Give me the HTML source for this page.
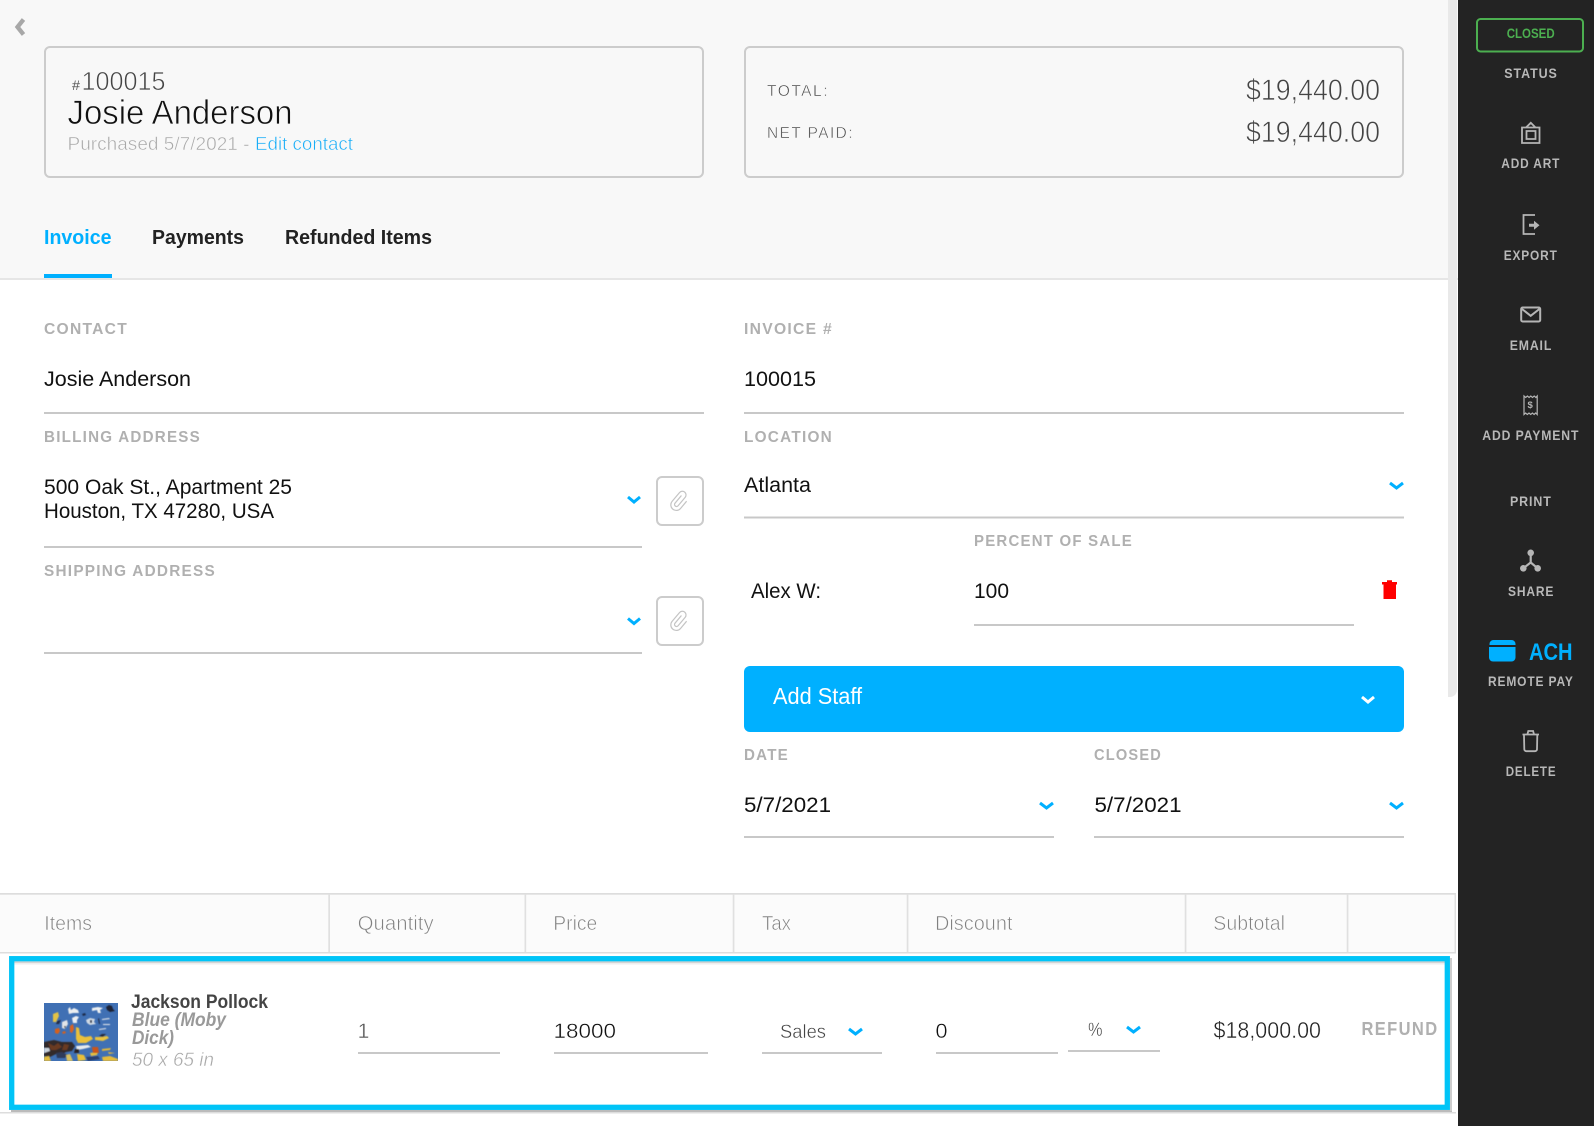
<!DOCTYPE html>
<html lang="en"><head><meta charset="utf-8"><title>Invoice 100015</title>
<style>
html,body{margin:0;padding:0;background:#fff;width:1594px;height:1126px;overflow:hidden}
svg{display:block;font-family:"Liberation Sans",sans-serif}
.l{font-size:16px;font-weight:700;fill:#b0b0b0;letter-spacing:1.3px}
.v{font-size:21px;fill:#111}
.s{font-size:14px;font-weight:700;fill:#b8b8b8;letter-spacing:1px}
.h{font-size:20px;fill:#808080;stroke:#fbfbfb;stroke-width:.6}
.tg{stroke:#f8f8f8;stroke-width:.5}
.tw{stroke:#fff;stroke-width:.4}
.ch{fill:none;stroke:#00b0ff;stroke-width:3}
.ln{fill:#c8c8c8}
.ic{fill:none;stroke:#b5b5b5;stroke-width:1.8}
.sep{fill:#e0e0e0}
.clip{fill:none;stroke:#c4c4c4;stroke-width:1.2}
</style></head><body>
<svg width="1594" height="1126" viewBox="0 0 1594 1126" xmlns="http://www.w3.org/2000/svg">
<defs><filter id="b" x="-5%" y="-5%" width="110%" height="110%"><feGaussianBlur stdDeviation=".45"/></filter><clipPath id="pc"><rect x="44" y="1003" width="74" height="58"/></clipPath></defs>
<!-- header -->
<rect x="0" y="0" width="1458" height="278" fill="#f8f8f8"/>
<rect x="0" y="278" width="1458" height="2" fill="#e6e6e6"/>
<path d="M1448 0H1457V690a7 7 0 0 1-7 7h-2z" fill="#e9e9e9"/>
<polyline points="23.5,19.5 17.5,27 23.5,34.5" fill="none" stroke="#a8a8a8" stroke-width="4.300"/>

<rect x="45" y="47" width="658" height="130" rx="5" fill="none" stroke="#ccc" stroke-width="2"/>
<text x="72" y="90" font-size="14" fill="#555" textLength="8" lengthAdjust="spacingAndGlyphs">#</text>
<text x="81.5" y="90" font-size="26" fill="#444" class="tg" style="stroke-width:.65" textLength="84" lengthAdjust="spacingAndGlyphs">100015</text>
<text x="67.5" y="124" font-size="34" fill="#111" class="tg" style="stroke-width:.7" textLength="225" lengthAdjust="spacingAndGlyphs">Josie Anderson</text>
<text x="67.5" y="150" font-size="18.500" fill="#a8a8a8" class="tg" textLength="182" lengthAdjust="spacingAndGlyphs">Purchased 5/7/2021 -</text>
<text x="255" y="150" font-size="18.500" fill="#18aef8" class="tg" textLength="98" lengthAdjust="spacingAndGlyphs">Edit contact</text>

<rect x="745" y="47" width="658" height="130" rx="5" fill="none" stroke="#ccc" stroke-width="2"/>
<text x="767" y="96" font-size="16" fill="#444" class="tg" letter-spacing="1.500" textLength="62" lengthAdjust="spacingAndGlyphs">TOTAL:</text>
<text x="767" y="138" font-size="16" fill="#444" class="tg" letter-spacing="1.500" textLength="87" lengthAdjust="spacingAndGlyphs">NET PAID:</text>
<text x="1246" y="100" font-size="29.500" fill="#444" class="tg" style="stroke-width:.7" textLength="134" lengthAdjust="spacingAndGlyphs">$19,440.00</text>
<text x="1246" y="142" font-size="29.500" fill="#444" class="tg" style="stroke-width:.7" textLength="134" lengthAdjust="spacingAndGlyphs">$19,440.00</text>

<text x="44" y="244" font-size="20.500" font-weight="700" fill="#00b0ff" textLength="67.500" lengthAdjust="spacingAndGlyphs">Invoice</text>
<text x="152" y="244" font-size="20.500" font-weight="700" fill="#222" textLength="92" lengthAdjust="spacingAndGlyphs">Payments</text>
<text x="285" y="244" font-size="20.500" font-weight="700" fill="#222" textLength="147" lengthAdjust="spacingAndGlyphs">Refunded Items</text>
<rect x="44" y="274" width="68" height="4" fill="#00b0ff"/>

<!-- left form -->
<text class="l" x="44" y="334" textLength="84" lengthAdjust="spacingAndGlyphs">CONTACT</text>
<text class="v" x="44" y="386" textLength="147" lengthAdjust="spacingAndGlyphs">Josie Anderson</text>
<rect class="ln" x="44" y="412" width="660" height="2"/>
<text class="l" x="44" y="442" textLength="157" lengthAdjust="spacingAndGlyphs">BILLING ADDRESS</text>
<text class="v" x="44" y="494" textLength="248" lengthAdjust="spacingAndGlyphs">500 Oak St., Apartment 25</text>
<text class="v" x="44" y="518" textLength="230" lengthAdjust="spacingAndGlyphs">Houston, TX 47280, USA</text>
<polyline class="ch" points="628,497 634,502 640,497"/>
<rect class="ln" x="44" y="546" width="598" height="2"/>
<rect x="657" y="477" width="46" height="48" rx="5" fill="none" stroke="#ccc" stroke-width="2"/>
<g transform="translate(679 500) rotate(40)"><path class="clip" d="M-1-5V5a2 2 0 0 0 4 0V-6a3.700 3.700 0 0 0-7.400 0V5.500a5.500 5.500 0 0 0 11 0V-4"/></g>
<text class="l" x="44" y="576" textLength="172" lengthAdjust="spacingAndGlyphs">SHIPPING ADDRESS</text>
<polyline class="ch" points="628,618.500 634,623.500 640,618.500"/>
<rect class="ln" x="44" y="652" width="598" height="2"/>
<rect x="657" y="597" width="46" height="48" rx="5" fill="none" stroke="#ccc" stroke-width="2"/>
<g transform="translate(679 620) rotate(40)"><path class="clip" d="M-1-5V5a2 2 0 0 0 4 0V-6a3.700 3.700 0 0 0-7.400 0V5.500a5.500 5.500 0 0 0 11 0V-4"/></g>

<!-- right form -->
<text class="l" x="744" y="334" textLength="89" lengthAdjust="spacingAndGlyphs">INVOICE #</text>
<text class="v" x="744" y="386" textLength="72" lengthAdjust="spacingAndGlyphs">100015</text>
<rect class="ln" x="744" y="412" width="660" height="2"/>
<text class="l" x="744" y="442" textLength="89" lengthAdjust="spacingAndGlyphs">LOCATION</text>
<text class="v" x="744" y="492" textLength="67" lengthAdjust="spacingAndGlyphs">Atlanta</text>
<polyline class="ch" points="1390,483 1396.500,488 1403,483"/>
<rect class="ln" x="744" y="516.500" width="660" height="2"/>
<text class="l" x="974" y="546" textLength="159" lengthAdjust="spacingAndGlyphs">PERCENT OF SALE</text>
<text class="v" x="751" y="598" textLength="70" lengthAdjust="spacingAndGlyphs">Alex W:</text>
<text class="v" x="974" y="598" textLength="35" lengthAdjust="spacingAndGlyphs">100</text>
<rect class="ln" x="974" y="624" width="380" height="2"/>
<path d="M1383.500 584h12.500V599h-12.500zM1382 582h15v2.500h-15zM1387 580.300h5v2h-5z" fill="#ff0000"/>
<rect x="744" y="666" width="660" height="66" rx="6" fill="#00b0ff"/>
<text x="773" y="704" font-size="23" fill="#fff" textLength="89" lengthAdjust="spacingAndGlyphs">Add Staff</text>
<polyline points="1362,697 1368,702 1374,697" fill="none" stroke="#fff" stroke-width="3"/>
<text class="l" x="744" y="760" textLength="45" lengthAdjust="spacingAndGlyphs">DATE</text>
<text class="l" x="1094" y="760" textLength="68" lengthAdjust="spacingAndGlyphs">CLOSED</text>
<text class="v" x="744" y="812" textLength="87" lengthAdjust="spacingAndGlyphs">5/7/2021</text>
<text class="v" x="1094.500" y="812" textLength="87" lengthAdjust="spacingAndGlyphs">5/7/2021</text>
<polyline class="ch" points="1040,803 1046.500,808 1053,803"/>
<polyline class="ch" points="1390,803 1396.500,808 1403,803"/>
<rect class="ln" x="744" y="836" width="310" height="2"/>
<rect class="ln" x="1094" y="836" width="310" height="2"/>

<!-- table head -->
<rect x="0" y="893" width="1456" height="60" fill="#fbfbfb"/>
<rect x="0" y="893" width="1456" height="1.700" fill="#ddd"/>
<rect x="0" y="952" width="1456" height="1.500" fill="#ddd"/>
<rect class="sep" x="328.300" y="894" width="1.700" height="58"/>
<rect class="sep" x="524.500" y="894" width="1.700" height="58"/>
<rect class="sep" x="732.700" y="894" width="1.700" height="58"/>
<rect class="sep" x="906.700" y="894" width="1.700" height="58"/>
<rect class="sep" x="1184.700" y="894" width="1.700" height="58"/>
<rect class="sep" x="1346.700" y="894" width="1.700" height="58"/>
<rect class="sep" x="1454.500" y="894" width="1.500" height="58"/>
<text class="h" x="44.300" y="930" textLength="47.700" lengthAdjust="spacingAndGlyphs">Items</text>
<text class="h" x="357.700" y="930" textLength="76" lengthAdjust="spacingAndGlyphs">Quantity</text>
<text class="h" x="553.300" y="930" textLength="44" lengthAdjust="spacingAndGlyphs">Price</text>
<text class="h" x="762" y="930" textLength="29" lengthAdjust="spacingAndGlyphs">Tax</text>
<text class="h" x="935" y="930" textLength="77.500" lengthAdjust="spacingAndGlyphs">Discount</text>
<text class="h" x="1213.300" y="930" textLength="71.700" lengthAdjust="spacingAndGlyphs">Subtotal</text>

<!-- table row -->
<rect x="0" y="1112" width="1456" height="1.500" fill="#ddd"/>
<rect x="11" y="1110" width="1441" height="2" fill="#bbb"/>
<rect x="1450" y="958" width="2" height="153" fill="#ccc"/>
<rect x="14" y="961" width="1431" height="2" fill="#d4d4d4"/>
<rect x="14" y="963" width="1431" height="1.500" fill="#eee"/>
<rect x="11.700" y="958.700" width="1435.600" height="148.600" fill="none" stroke="#00c4f7" stroke-width="5.300"/>

<!-- painting -->
<g clip-path="url(#pc)">
<rect x="44" y="1003" width="74" height="58" fill="#4070b4"/>
<g filter="url(#b)">
<path d="M44 1042l10-2 8 2 10 0 3 4-3 5-6 1-5 3-5-1-6 3-6-1z" fill="#33292c"/>
<path d="M48 1043l6 3 4-3 4 4-6 3-5 0zM64 1044l5 1-2 5-5 0z" fill="#6a3a22"/>
<path d="M44 1048l5 0 1 3-6 2z" fill="#c9d2dc"/>
<path d="M44 1057l5-1 2 5h-7z" fill="#e3bc3c"/>
<path d="M56 1053l6-1 6 3-3 3-8 0z" fill="#2d3a5a"/>
<path d="M66 1055l4-1 3 7h-6z" fill="#d8c060"/>
<path d="M77 1054l7 1 2 5-8 1z" fill="#e8bf38"/>
<path d="M86 1057l12-1 2 3-12 2z" fill="#2a3f70"/>
<path d="M102 1057l8-1 8 3v2h-15z" fill="#e6bc3a"/>
<path d="M90 1053l8-1-1 3-6 1z" fill="#e8c040"/>
<path d="M92 1047h6l1 6-6 0z" fill="#c9541e"/>
<path d="M76 1046l12-1 3 2-8 2-6 1z" fill="#e8ebee"/>
<path d="M75 1049l4 0 0 4-5 0z" fill="#2a2226"/>
<path d="M102 1049l9-1-1 2-8 1zM108 1052l7 1-6 1z" fill="#e4b838"/>
<path d="M76 1027l3 1 1 7 5 2 6-1 2 3-7 4-8 0-2-4z" fill="#eac03a"/>
<path d="M95 1037l7 0 5-1 2 2-6 3-8-1z" fill="#e9c23e"/>
<path d="M99 1036l3-2 4 0-3 3z" fill="#252a3a"/>
<path d="M53 1014l5-2 1 4-3 6-3 0z" fill="#e3c344"/>
<path d="M57 1021l4-1-2 4-3 0z" fill="#222a44"/>
<path d="M55 1029l4-1 1 3-2 3-3-1zM62 1032l3-1 1 2-3 1z" fill="#d5601f"/>
<path d="M70 1026l3-2 1 5-2 4-2-1z" fill="#d96420"/>
<path d="M62 1022l5-2 1 4-3 5-3-1z" fill="#e2e5e8"/>
<path d="M64 1026l2 0-1 3z" fill="#2a2a33"/>
<path d="M72 1018l4-2 3 1-2 3 0 3-4 0z" fill="#eef0f2"/>
<path d="M68 1009l2-2 1 3 3-2 4 2 1 3-6 0-4 1z" fill="#eceff1"/>
<path d="M82 1014l3-1 1 2-3 1z" fill="#1e2a48"/>
<path d="M92 1008l6-1 5 1-3 2 1 3-3 0-1-3-5 1z" fill="#eef1f3"/>
<path d="M106 1007l3-2 3 1 1 3 2 2-5 1-3-2z" fill="#1f2236"/>
<path d="M86 1020l4-2 5 1-1 3 2 2-6 1-3-2z" fill="#cfd9e4"/>
<path d="M90 1020l2 0 0 3-2 0z" fill="#26304e"/>
<path d="M102 1019l7-1 1 1-8 1zM99 1029l7-1 0 1-7 1zM103 1024l7 0 0 1-7 0z" fill="#e8eaec"/>
<path d="M98 1019l1-1 1 6-1 0z" fill="#1f2b4a"/>
</g></g>

<text x="131" y="1008" font-size="19.500" font-weight="700" fill="#444" textLength="137" lengthAdjust="spacingAndGlyphs">Jackson Pollock</text>
<text x="132" y="1026" font-size="19.500" font-weight="700" font-style="italic" fill="#999" textLength="94" lengthAdjust="spacingAndGlyphs">Blue (Moby</text>
<text x="132" y="1044" font-size="19.500" font-weight="700" font-style="italic" fill="#999" textLength="42" lengthAdjust="spacingAndGlyphs">Dick)</text>
<text x="132" y="1066" font-size="19.500" font-style="italic" fill="#aaa" class="tw" textLength="82" lengthAdjust="spacingAndGlyphs">50 x 65 in</text>
<text x="357.500" y="1038" font-size="21" fill="#555" class="tw" textLength="12" lengthAdjust="spacingAndGlyphs">1</text>
<rect class="ln" x="358" y="1052" width="142" height="2"/>
<text x="553.500" y="1038" font-size="21" fill="#111" class="tw" textLength="62.500" lengthAdjust="spacingAndGlyphs">18000</text>
<rect class="ln" x="554" y="1052" width="154" height="2"/>
<text x="780" y="1038" font-size="19.500" fill="#444" class="tw" textLength="46" lengthAdjust="spacingAndGlyphs">Sales</text>
<polyline class="ch" points="849,1029 855.500,1034 862,1029"/>
<rect class="ln" x="762" y="1052" width="120" height="2"/>
<text x="935.500" y="1038" font-size="21" fill="#111" class="tw" textLength="12" lengthAdjust="spacingAndGlyphs">0</text>
<rect class="ln" x="936" y="1052" width="122" height="2"/>
<text x="1088" y="1036" font-size="19.500" fill="#333" class="tw" textLength="14.500" lengthAdjust="spacingAndGlyphs">%</text>
<polyline class="ch" points="1127,1027 1133.500,1032 1140,1027"/>
<rect class="ln" x="1068" y="1050" width="92" height="2"/>
<text x="1213.500" y="1038" font-size="23" fill="#222" class="tw" textLength="107.500" lengthAdjust="spacingAndGlyphs">$18,000.00</text>
<text x="1361.500" y="1035" font-size="18" font-weight="700" fill="#b0b0b0" letter-spacing="1.500" textLength="77" lengthAdjust="spacingAndGlyphs">REFUND</text>

<!-- sidebar -->
<rect x="1458" y="0" width="136" height="1126" fill="#232323"/>
<rect x="1477" y="19" width="106" height="32.500" rx="3.500" fill="none" stroke="#4caf50" stroke-width="2"/>
<text x="1506.700" y="38" font-size="14" font-weight="700" fill="#4caf50" textLength="48" lengthAdjust="spacingAndGlyphs">CLOSED</text>
<text class="s" x="1504.300" y="78" textLength="53.400" lengthAdjust="spacingAndGlyphs">STATUS</text>

<path class="ic" d="M1522 127.500h17.500v15.500H1522zM1526.500 131h9v8h-9zM1526 127.500l4.800-4.700 4.700 4.700"/>
<text class="s" x="1501.300" y="168" textLength="59" lengthAdjust="spacingAndGlyphs">ADD ART</text>

<path class="ic" d="M1535 215h-11.500v19H1535"/>
<path d="M1529 223.700h5v-3l5.500 4.500-5.500 4.500v-3h-5z" fill="#b5b5b5"/>
<text class="s" x="1503.700" y="260" textLength="54" lengthAdjust="spacingAndGlyphs">EXPORT</text>

<rect x="1521.200" y="307.500" width="19" height="14" rx="1.500" fill="none" stroke="#b5b5b5" stroke-width="2"/>
<path d="M1522 309l8.700 6.800 8.700-6.800" fill="none" stroke="#b5b5b5" stroke-width="2"/>
<text class="s" x="1509.700" y="350" textLength="42.500" lengthAdjust="spacingAndGlyphs">EMAIL</text>

<path d="M1524 396l1.700 1.500 1.700-1.500 1.700 1.500 1.700-1.500 1.700 1.500 1.700-1.500 1.700 1.500 1.300-1.500v18.500l-1.500-1.500-1.600 1.500-1.700-1.500-1.700 1.500-1.700-1.500-1.700 1.500-1.700-1.500-1.600 1.500z" fill="none" stroke="#b5b5b5" stroke-width="1.200"/>
<text x="1527.500" y="408" font-size="9.500" font-weight="700" fill="#b5b5b5">$</text>
<text class="s" x="1482.300" y="440" textLength="97" lengthAdjust="spacingAndGlyphs">ADD PAYMENT</text>

<text class="s" x="1510" y="506" textLength="41.700" lengthAdjust="spacingAndGlyphs">PRINT</text>

<path d="M1530.700 553v9.500l-7.400 5.800M1530.700 562.500l7 5.800" fill="none" stroke="#b5b5b5" stroke-width="2.200"/>
<circle cx="1530.700" cy="552.800" r="3.300" fill="#b5b5b5"/><circle cx="1523.300" cy="568.300" r="3.300" fill="#b5b5b5"/><circle cx="1537.700" cy="568.300" r="3.300" fill="#b5b5b5"/>
<text class="s" x="1508" y="596" textLength="46.300" lengthAdjust="spacingAndGlyphs">SHARE</text>

<path d="M1493 640h18.500a4 4 0 0 1 4 4v1h-26v-1a4 4 0 0 1 4-4zM1489 647h26.500v10.500a4 4 0 0 1-4 4H1493a4 4 0 0 1-4-4z" fill="#00b0ff"/>
<text x="1529" y="660" font-size="24" font-weight="700" fill="#00b0ff" textLength="43.500" lengthAdjust="spacingAndGlyphs">ACH</text>
<text class="s" x="1488" y="686" textLength="85.700" lengthAdjust="spacingAndGlyphs">REMOTE PAY</text>

<path class="ic" d="M1522.500 734.500h16.500M1524 735l.3 14.300a2 2 0 0 0 2 1.900h8.700a2 2 0 0 0 2-1.900l.3-14.300M1527.500 734l.8-3h4.800l.8 3"/>
<text class="s" x="1505.700" y="776" textLength="50.700" lengthAdjust="spacingAndGlyphs">DELETE</text>
</svg>
</body></html>
